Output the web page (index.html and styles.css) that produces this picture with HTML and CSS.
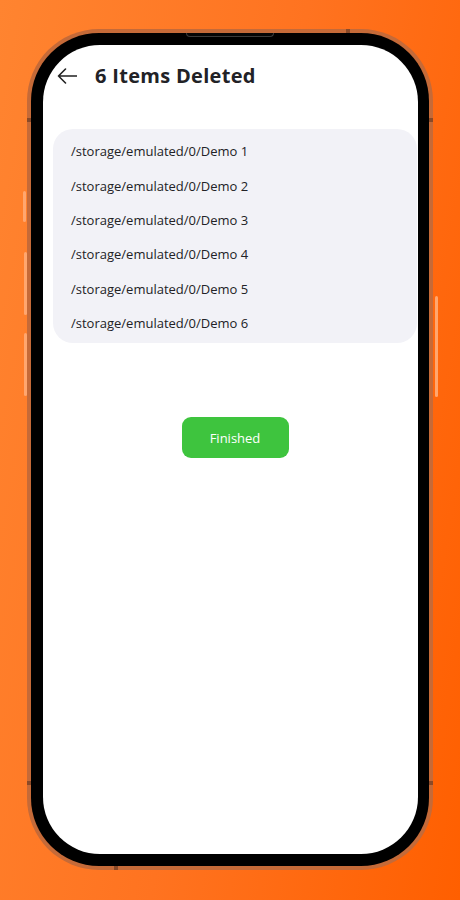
FILE: index.html
```html
<!DOCTYPE html>
<html>
<head>
<meta charset="utf-8">
<link rel="stylesheet" href="styles.css">
</head>
<body>
<div class="stage">
  <div class="phone">
    <span class="btn-side l1"></span>
    <span class="btn-side l2"></span>
    <span class="btn-side l3"></span>
    <span class="btn-side r1"></span>
    <span class="tick t-top"></span>
    <span class="tick t-l1"></span>
    <span class="tick t-r1"></span>
    <span class="tick t-l2"></span>
    <span class="tick t-r2"></span>
    <span class="tick t-bot"></span>
    <div class="bezel">
      <span class="notch"></span>
      <div class="screen">
        <div class="header">
          <svg class="back" width="20" height="16" viewBox="0 0 20 16">
            <path d="M19.5 8H1.5M8.5 1L1.5 8L8.5 15" fill="none" stroke="#222" stroke-width="1.6" stroke-linecap="round" stroke-linejoin="round"/>
          </svg>
          <h1 class="title">6 Items Deleted</h1>
        </div>
        <ul class="list">
          <li class="row">/storage/emulated/0/Demo 1</li>
          <li class="row">/storage/emulated/0/Demo 2</li>
          <li class="row">/storage/emulated/0/Demo 3</li>
          <li class="row">/storage/emulated/0/Demo 4</li>
          <li class="row">/storage/emulated/0/Demo 5</li>
          <li class="row">/storage/emulated/0/Demo 6</li>
        </ul>
        <div class="actions">
          <button class="finish">Finished</button>
        </div>
      </div>
    </div>
  </div>
</div>
</body>
</html>
```

FILE: styles.css
```css
* { box-sizing: border-box; }
html, body { margin: 0; padding: 0; }
body {
  width: 460px;
  height: 900px;
  overflow: hidden;
  background: linear-gradient(100deg, #ff8430 0%, #ff7320 50%, #ff5f00 100%);
  font-family: "Open Sans", "Noto Sans", sans-serif;
}
.stage {
  padding: 29px 0 0 27px;
}
.phone {
  position: relative;
  width: 406px;
  height: 841px;
  border-radius: 72px;
  background: #c56a38;
  padding: 4px;
}
.bezel {
  position: relative;
  height: 100%;
  border-radius: 68px;
  background: #000;
  padding: 12px 11px 12px 12px;
}
.notch {
  position: absolute;
  left: 155px;
  top: 0;
  width: 88px;
  height: 4px;
  border: 1px solid #3a3a3a;
  border-top: none;
  border-radius: 0 0 5px 5px;
  background: #050505;
}
.screen {
  height: 100%;
  background: #fff;
  border-radius: 57px;
  overflow: hidden;
  padding-top: 17px;
}
.header {
  display: flex;
  align-items: center;
  height: 27px;
  padding-left: 14px;
}
.back {
  display: block;
  flex: none;
}
.title {
  margin: 0 0 0 18px;
  font-size: 20px;
  font-weight: 700;
  color: #222226;
  line-height: 27px;
  letter-spacing: 0.3px;
}
.list {
  list-style: none;
  margin: 40px 1px 0 10px;
  padding: 5px 0 3px;
  background: #f2f2f7;
  border-radius: 20px;
}
.row {
  height: 34.4px;
  display: flex;
  align-items: center;
  padding-left: 18px;
  font-size: 13px;
  color: #222226;
}
.actions {
  margin: 74px 1px 0 10px;
  display: flex;
  justify-content: center;
}
.finish {
  width: 107px;
  height: 41px;
  border: none;
  border-radius: 9px;
  background: #3ec43e;
  color: #fff;
  font-family: "Open Sans", "Noto Sans", sans-serif;
  font-size: 13px;
  padding: 0;
}
.btn-side {
  position: absolute;
  width: 3px;
  background: #ffa66e;
  border-radius: 2px;
}
.l1 { left: -4px; top: 162px; height: 31px; }
.l2 { left: -3px; top: 223px; height: 63px; }
.l3 { left: -3px; top: 304px; height: 63px; }
.r1 { right: -5px; top: 267px; height: 101px; }
.tick {
  position: absolute;
  background: #8a4a28;
}
.t-top { left: 319px; top: 0; width: 4px; height: 4px; }
.t-l1 { left: 0; top: 89px; width: 4px; height: 4px; }
.t-r1 { right: 0; top: 89px; width: 4px; height: 4px; }
.t-l2 { left: 0; top: 752px; width: 4px; height: 4px; }
.t-r2 { right: 0; top: 752px; width: 4px; height: 4px; }
.t-bot { left: 87px; bottom: 0; width: 4px; height: 4px; }
```
